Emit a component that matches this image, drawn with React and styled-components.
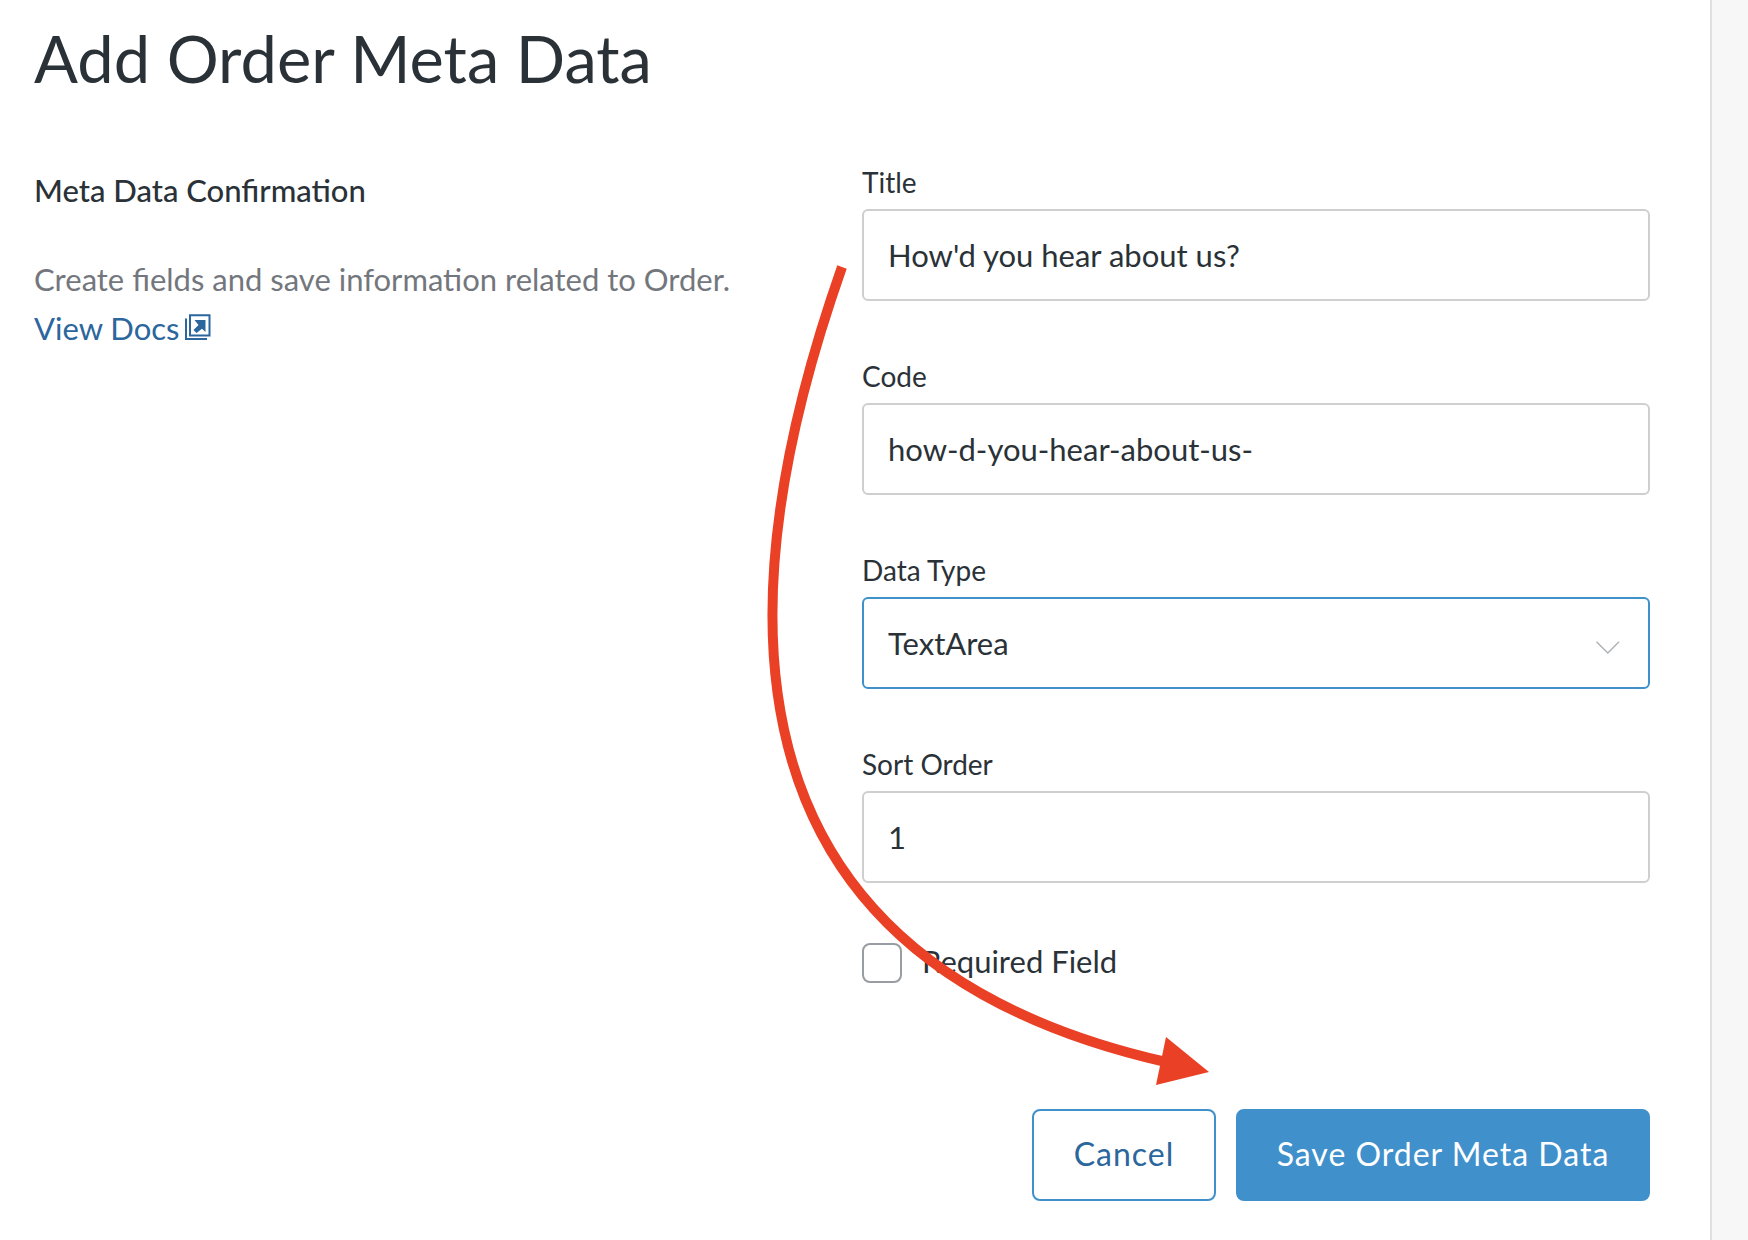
import React, { useState } from "react";
import styled, { createGlobalStyle } from "styled-components";

const GlobalStyle = createGlobalStyle`
  * {
    box-sizing: border-box;
  }

  body {
    margin: 0;
    background-color: #f7f7f7;
    color: #2a3238;
    font-family: Lato, sans-serif;
    font-size: 31px;
  }

  input, select, button {
    font: inherit;
    color: inherit;
  }
`;

const Page = styled.main`
  position: relative;
  min-height: 100vh;
  margin-right: 36px;
  padding: 18px 60px 38px 34px;
  background-color: #fff;
  border-right: 2px solid #e0e0e0;

  h1 {
    margin: 0 0 66px;
    font-size: 65px;
    font-weight: 400;
    line-height: 80px;
  }
`;

const Columns = styled.div`
  display: grid;
  grid-template-columns: 1fr 1fr;
  gap: 40px;
`;

const Intro = styled.section`
  h2 {
    margin: 2px 0 40px;
    font-size: 31px;
    font-weight: 500;
    line-height: 49px;
  }

  p {
    margin: 0;
    color: #73777d;
    line-height: 49px;
  }

  a {
    color: #2b669c;
    text-decoration: none;
  }

  svg {
    margin-left: 6px;
  }
`;

const Field = styled.div`
  margin-bottom: 57px;

  label {
    display: block;
    margin-bottom: 9px;
    font-size: 28px;
    line-height: 36px;
  }

  input,
  select {
    display: block;
    width: 100%;
    height: 92px;
    padding: 0 24px;
    border: 2px solid #cfcfcf;
    border-radius: 6px;
    background-color: #fff;
    outline: none;
    appearance: none;
  }

  select {
    border-color: #3f90cb;
  }
`;

const SelectWrap = styled.div`
  position: relative;

  svg {
    position: absolute;
    top: 44px;
    right: 30px;
    pointer-events: none;
  }
`;

const Check = styled.div`
  display: flex;
  align-items: flex-start;
  gap: 20px;
  margin: 60px 0 126px;

  input {
    width: 40px;
    height: 40px;
    margin: 0;
    border: 2px solid #979da2;
    border-radius: 8px;
    background-color: #fff;
    appearance: none;
  }

  input:checked {
    background-color: #3f90cb;
  }

  label {
    line-height: 36px;
  }
`;

const Actions = styled.div`
  display: flex;
  justify-content: flex-end;
  gap: 20px;
`;

const Button = styled.button`
  min-width: ${(props) => (props.$primary ? "414px" : "184px")};
  height: 92px;
  padding: 0 24px 4px;
  border: 2px solid #3f90cb;
  border-radius: 8px;
  background-color: ${(props) => (props.$primary ? "#3f90cb" : "#fff")};
  color: ${(props) => (props.$primary ? "#fff" : "#2b669c")};
  font-size: 32px;
  letter-spacing: 1px;
`;

const Arrow = styled.svg`
  position: absolute;
  top: 0;
  left: 0;
  pointer-events: none;
`;

const DocsIcon = () => (
  <svg width="26" height="26" viewBox="0 0 26 26" fill="none" aria-hidden="true">
    <path d="M5 1.2H24.5V21.5H5Z" stroke="currentColor" strokeWidth="2" />
    <path d="M1 4.5V25H22" stroke="currentColor" strokeWidth="2" />
    <path d="M9.5 6H20.5V18L17 14.8L11.5 19L8.5 16L13.5 11Z" fill="currentColor" />
  </svg>
);

const App = () => {
  const [title, setTitle] = useState("How'd you hear about us?");
  const [code, setCode] = useState("how-d-you-hear-about-us-");
  const [sort, setSort] = useState("1");

  return (
    <>
      <GlobalStyle />
      <Page>
        <h1>Add Order Meta Data</h1>
        <Columns>
          <Intro>
            <h2>Meta Data Confirmation</h2>
            <p>Create fields and save information related to Order.</p>
            <p>
              <a href="#docs">
                View Docs
                <DocsIcon />
              </a>
            </p>
          </Intro>
          <form onSubmit={(e) => e.preventDefault()}>
            <Field>
              <label htmlFor="title">Title</label>
              <input
                id="title"
                type="text"
                value={title}
                onChange={(e) => setTitle(e.target.value)}
              />
            </Field>
            <Field>
              <label htmlFor="code">Code</label>
              <input
                id="code"
                type="text"
                value={code}
                onChange={(e) => setCode(e.target.value)}
              />
            </Field>
            <Field>
              <label htmlFor="type">Data Type</label>
              <SelectWrap>
                <select id="type" defaultValue="textarea">
                  <option value="textarea">TextArea</option>
                </select>
                <svg width="24" height="14" viewBox="0 0 24 14" fill="none">
                  <path d="M0.5 0.8L11.8 12L23 0.8" stroke="#aeb1b4" strokeWidth="1.4" />
                </svg>
              </SelectWrap>
            </Field>
            <Field>
              <label htmlFor="sort">Sort Order</label>
              <input
                id="sort"
                type="text"
                value={sort}
                onChange={(e) => setSort(e.target.value)}
              />
            </Field>
            <Check>
              <input id="required" type="checkbox" />
              <label htmlFor="required">Required Field</label>
            </Check>
            <Actions>
              <Button type="button">Cancel</Button>
              <Button type="submit" $primary>
                Save Order Meta Data
              </Button>
            </Actions>
          </form>
        </Columns>
        <Arrow width="1240" height="1100" viewBox="0 0 1240 1100" aria-hidden="true">
          <path
            d="M842 267Q607 935 1166 1062"
            fill="none"
            stroke="#ea4025"
            strokeWidth="10"
          />
          <path d="M1166 1037L1209 1072L1156 1085Z" fill="#ea4025" />
        </Arrow>
      </Page>
    </>
  );
};

export default App;
